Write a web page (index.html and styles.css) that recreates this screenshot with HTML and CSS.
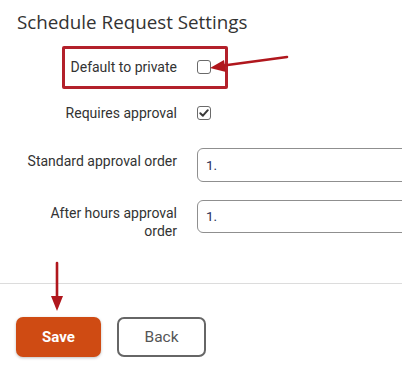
FILE: index.html
```html
<!DOCTYPE html>
<html>
<head>
<meta charset="utf-8">
<link rel="stylesheet" href="styles.css">
</head>
<body>
<div class="page">
  <h2 class="title">Schedule Request Settings</h2>
  <div class="form">
    <div class="row row-check first">
      <label class="lbl">Default to private</label>
      <div class="ctl"><span class="cb"></span></div>
    </div>
    <div class="row row-check second">
      <label class="lbl">Requires approval</label>
      <div class="ctl"><span class="cb checked"><svg viewBox="0 0 12 12" width="12" height="12"><path d="M2.3 6.2 L4.9 8.7 L9.8 3.2" fill="none" stroke="#3a3a3a" stroke-width="2" stroke-linecap="round" stroke-linejoin="round"/></svg></span></div>
    </div>
    <div class="row row-input third">
      <label class="lbl lbl-top">Standard approval order</label>
      <div class="ctl clip"><div class="input">1.</div></div>
    </div>
    <div class="row row-input fourth">
      <label class="lbl lbl-top">After hours approval order</label>
      <div class="ctl clip"><div class="input">1.</div></div>
    </div>
  </div>
  <hr class="divider">
  <div class="actions">
    <button class="btn btn-save">Save</button>
    <button class="btn btn-back">Back</button>
  </div>

  <div class="annot-box"></div>
  <svg class="annot-arrow1" width="402" height="367" viewBox="0 0 402 367">
    <line x1="287" y1="57" x2="220" y2="66" stroke="#b0171d" stroke-width="2.6" stroke-linecap="round"/>
    <polygon points="210,68 224,60 226,72" fill="#b0171d"/>
    <line x1="57" y1="263" x2="57" y2="298" stroke="#b0171d" stroke-width="2.6" stroke-linecap="round"/>
    <polygon points="57,311 51,296 63,296" fill="#b0171d"/>
  </svg>
</div>
</body>
</html>
```

FILE: styles.css
```css
html, body {
  margin: 0;
  padding: 0;
  background: #fff;
}
body {
  width: 402px;
  height: 367px;
  overflow: hidden;
  font-family: Roboto, "Liberation Sans", sans-serif;
  color: #333;
}
.page {
  position: relative;
  width: 402px;
  height: 367px;
  overflow: hidden;
}
.title {
  margin: 0;
  padding: 9px 0 0 17px;
  font-family: "Open Sans", "Noto Sans", sans-serif;
  font-weight: 400;
  font-size: 18.8px;
  line-height: 26px;
  color: #333;
}
.form {
  display: flex;
  flex-direction: column;
}
.row {
  display: grid;
  grid-template-columns: 177px 1fr;
  column-gap: 20px;
}
.row-check {
  height: 20px;
  align-items: center;
}
.first { margin-top: 22px; }
.second { margin-top: 26px; }
.third { margin-top: 25px; }
.fourth { margin-top: 18px; }
.lbl {
  box-sizing: border-box;
  padding-left: 20px;
  text-align: right;
  font-size: 14px;
  line-height: 18px;
  color: #333;
}
.lbl-top {
  padding-top: 4px;
}
.ctl {
  display: flex;
  align-items: center;
  min-width: 0;
}
.clip { overflow: hidden; }
.cb {
  box-sizing: border-box;
  width: 14px;
  height: 14px;
  border: 1.5px solid #6a6a6a;
  border-radius: 3px;
  background: #fff;
  display: flex;
  align-items: center;
  justify-content: center;
}
.cb svg { display: block; }
.row-input .ctl {
  align-items: flex-start;
}
.input {
  box-sizing: border-box;
  width: 260px;
  flex: none;
  height: 34px;
  border: 1px solid #8f8f8f;
  border-radius: 6px;
  padding: 0 8px;
  font-size: 13.5px;
  line-height: 32px;
  color: #2a2f55;
}
.fourth .input { height: 33px; line-height: 31px; }
.divider {
  margin: 43px 0 0 0;
  border: 0;
  border-top: 1px solid #dcdcdc;
  height: 0;
}
.actions {
  display: flex;
  gap: 16px;
  padding: 33px 0 0 16px;
}
.btn {
  box-sizing: border-box;
  height: 40px;
  border-radius: 7px;
  font-family: Roboto, "Liberation Sans", sans-serif;
  font-size: 15px;
  cursor: pointer;
}
.btn-save {
  width: 85px;
  background: #cf4b13;
  color: #fff;
  font-weight: 700;
  border: 0;
  box-shadow: 0 1px 3px rgba(0,0,0,0.25);
}
.btn-back {
  width: 89px;
  background: #fff;
  color: #555;
  font-weight: 400;
  font-size: 15.5px;
  border: 2px solid #666;
}
.annot-box {
  position: absolute;
  left: 62px;
  top: 46px;
  width: 166px;
  height: 43px;
  box-sizing: border-box;
  border: 3px solid #b3202a;
  border-radius: 2px;
}
.annot-arrow1 {
  position: absolute;
  left: 0;
  top: 0;
  pointer-events: none;
}
```
